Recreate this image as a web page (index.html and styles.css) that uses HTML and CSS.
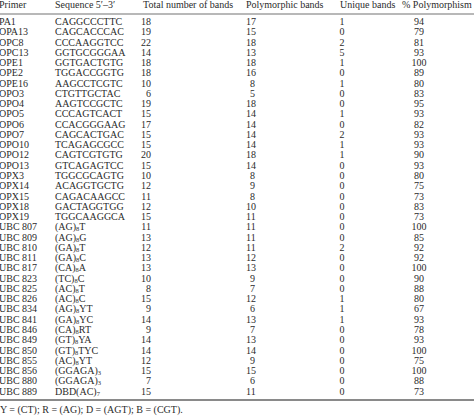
FILE: index.html
```html
<!DOCTYPE html>
<html>
<head>
<meta charset="utf-8">
<link rel="stylesheet" href="styles.css">
</head>
<body>
<div class="page">
<table class="data">
<colgroup>
<col class="c1"><col class="c2"><col class="c3"><col class="c4"><col class="c5"><col class="c6">
</colgroup>
<thead>
<tr><th>Primer</th><th>Sequence 5′–3′</th><th class="h3">Total number of bands</th><th>Polymorphic bands</th><th class="h5">Unique bands</th><th>% Polymorphism</th></tr>
</thead>
<tbody>
<tr><td>PA1</td><td>CAGGCCCTTC</td><td class="t">18</td><td class="p">17</td><td class="u">1</td><td class="pc">94</td></tr>
<tr><td>OPA13</td><td>CAGCACCCAC</td><td class="t">19</td><td class="p">15</td><td class="u">0</td><td class="pc">79</td></tr>
<tr><td>OPC8</td><td>CCCAAGGTCC</td><td class="t">22</td><td class="p">18</td><td class="u">2</td><td class="pc">81</td></tr>
<tr><td>OPC13</td><td>GGTGCGGGAA</td><td class="t">14</td><td class="p">13</td><td class="u">5</td><td class="pc">93</td></tr>
<tr><td>OPE1</td><td>GGTGACTGTG</td><td class="t">18</td><td class="p">18</td><td class="u">1</td><td class="pc">100</td></tr>
<tr><td>OPE2</td><td>TGGACCGGTG</td><td class="t">18</td><td class="p">16</td><td class="u">0</td><td class="pc">89</td></tr>
<tr><td>OPE16</td><td>AAGCCTCGTC</td><td class="t">10</td><td class="p">8</td><td class="u">1</td><td class="pc">80</td></tr>
<tr><td>OPO3</td><td>CTGTTGCTAC</td><td class="t">6</td><td class="p">5</td><td class="u">0</td><td class="pc">83</td></tr>
<tr><td>OPO4</td><td>AAGTCCGCTC</td><td class="t">19</td><td class="p">18</td><td class="u">0</td><td class="pc">95</td></tr>
<tr><td>OPO5</td><td>CCCAGTCACT</td><td class="t">15</td><td class="p">14</td><td class="u">1</td><td class="pc">93</td></tr>
<tr><td>OPO6</td><td>CCACGGGAAG</td><td class="t">17</td><td class="p">14</td><td class="u">0</td><td class="pc">82</td></tr>
<tr><td>OPO7</td><td>CAGCACTGAC</td><td class="t">15</td><td class="p">14</td><td class="u">2</td><td class="pc">93</td></tr>
<tr><td>OPO10</td><td>TCAGAGCGCC</td><td class="t">15</td><td class="p">14</td><td class="u">1</td><td class="pc">93</td></tr>
<tr><td>OPO12</td><td>CAGTCGTGTG</td><td class="t">20</td><td class="p">18</td><td class="u">1</td><td class="pc">90</td></tr>
<tr><td>OPO13</td><td>GTCAGAGTCC</td><td class="t">15</td><td class="p">14</td><td class="u">0</td><td class="pc">93</td></tr>
<tr><td>OPX3</td><td>TGGCGCAGTG</td><td class="t">10</td><td class="p">8</td><td class="u">0</td><td class="pc">80</td></tr>
<tr><td>OPX14</td><td>ACAGGTGCTG</td><td class="t">12</td><td class="p">9</td><td class="u">0</td><td class="pc">75</td></tr>
<tr><td>OPX15</td><td>CAGACAAGCC</td><td class="t">11</td><td class="p">8</td><td class="u">0</td><td class="pc">73</td></tr>
<tr><td>OPX18</td><td>GACTAGGTGG</td><td class="t">12</td><td class="p">10</td><td class="u">0</td><td class="pc">83</td></tr>
<tr><td>OPX19</td><td>TGGCAAGGCA</td><td class="t">15</td><td class="p">11</td><td class="u">0</td><td class="pc">73</td></tr>
<tr><td>UBC 807</td><td>(AG)<sub>8</sub>T</td><td class="t">11</td><td class="p">11</td><td class="u">0</td><td class="pc">100</td></tr>
<tr><td>UBC 809</td><td>(AG)<sub>8</sub>G</td><td class="t">13</td><td class="p">11</td><td class="u">0</td><td class="pc">85</td></tr>
<tr><td>UBC 810</td><td>(GA)<sub>8</sub>T</td><td class="t">12</td><td class="p">11</td><td class="u">2</td><td class="pc">92</td></tr>
<tr><td>UBC 811</td><td>(GA)<sub>8</sub>C</td><td class="t">13</td><td class="p">12</td><td class="u">0</td><td class="pc">92</td></tr>
<tr><td>UBC 817</td><td>(CA)<sub>8</sub>A</td><td class="t">13</td><td class="p">13</td><td class="u">0</td><td class="pc">100</td></tr>
<tr><td>UBC 823</td><td>(TC)<sub>8</sub>C</td><td class="t">10</td><td class="p">9</td><td class="u">0</td><td class="pc">90</td></tr>
<tr><td>UBC 825</td><td>(AC)<sub>8</sub>T</td><td class="t">8</td><td class="p">7</td><td class="u">0</td><td class="pc">88</td></tr>
<tr><td>UBC 826</td><td>(AC)<sub>8</sub>C</td><td class="t">15</td><td class="p">12</td><td class="u">1</td><td class="pc">80</td></tr>
<tr><td>UBC 834</td><td>(AG)<sub>8</sub>YT</td><td class="t">9</td><td class="p">6</td><td class="u">1</td><td class="pc">67</td></tr>
<tr><td>UBC 841</td><td>(GA)<sub>8</sub>YC</td><td class="t">14</td><td class="p">13</td><td class="u">1</td><td class="pc">93</td></tr>
<tr><td>UBC 846</td><td>(CA)<sub>8</sub>RT</td><td class="t">9</td><td class="p">7</td><td class="u">0</td><td class="pc">78</td></tr>
<tr><td>UBC 849</td><td>(GT)<sub>8</sub>YA</td><td class="t">14</td><td class="p">13</td><td class="u">0</td><td class="pc">93</td></tr>
<tr><td>UBC 850</td><td>(GT)<sub>8</sub>TYC</td><td class="t">14</td><td class="p">14</td><td class="u">0</td><td class="pc">100</td></tr>
<tr><td>UBC 855</td><td>(AC)<sub>8</sub>YT</td><td class="t">12</td><td class="p">9</td><td class="u">0</td><td class="pc">75</td></tr>
<tr><td>UBC 856</td><td>(GGAGA)<sub>3</sub></td><td class="t">15</td><td class="p">15</td><td class="u">0</td><td class="pc">100</td></tr>
<tr><td>UBC 880</td><td>(GGAGA)<sub>3</sub></td><td class="t">7</td><td class="p">6</td><td class="u">0</td><td class="pc">88</td></tr>
<tr><td>UBC 889</td><td>DBD(AC)<sub>7</sub></td><td class="t">15</td><td class="p">11</td><td class="u">0</td><td class="pc">73</td></tr>
</tbody>
</table>
<p class="note">Y = (CT); R = (AG); D = (AGT); B = (CGT).</p>
</div>
</body>
</html>
```

FILE: styles.css
```css
html, body {
  margin: 0;
  padding: 0;
  background: #fff;
  overflow: hidden;
}
.page {
  width: 474px;
  height: 418px;
  overflow: hidden;
  font-family: "Liberation Serif", "Times New Roman", serif;
  font-size: 10px;
  color: #2b2b2b;
}
.data {
  border-collapse: collapse;
  table-layout: fixed;
  width: 496px;
  margin-left: -1px;
  margin-top: -1px;
}
.c1 { width: 56px; }
.c2 { width: 84px; }
.c3 { width: 107px; }
.c4 { width: 90px; }
.c5 { width: 66px; }
.c6 { width: 93px; }
.data th {
  font-weight: normal;
  text-align: left;
  padding: 0;
  height: 14px;
  line-height: 12px;
  vertical-align: top;
  white-space: nowrap;
  border-bottom: 2px solid #b8b8b8;
}
.data th.h3 { padding-left: 4px; }
.data th.h5 { padding-left: 4px; }
.data tbody tr:first-child td { padding-top: 2px; }
.data td {
  padding: 0;
  height: 10.26px;
  line-height: 10.26px;
  white-space: nowrap;
  text-align: left;
}
.data td.t { text-align: right; padding-right: 95px; }
.data td.p { text-align: right; padding-right: 81px; }
.data td.u { text-align: center; padding-right: 54px; }
.data td.pc { text-align: center; padding-right: 59px; }
.data tbody tr:last-child td {
  padding-bottom: 2px;
  border-bottom: 2px solid #8a8a8a;
}
.data sub {
  font-size: 6.5px;
  line-height: 0;
  vertical-align: -1px;
}
.note {
  margin: 4px 0 0 0;
  line-height: 10px;
}
```
